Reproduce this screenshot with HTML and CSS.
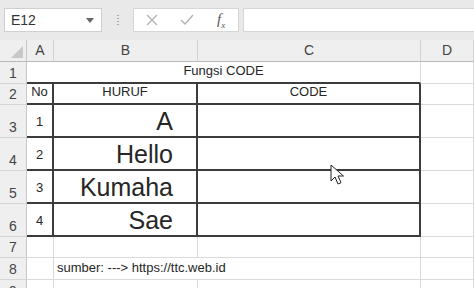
FILE: index.html
```html
<!DOCTYPE html>
<html lang="en">
<head>
    <meta charset="UTF-8">
    <title>Fungsi CODE</title>
    <link rel="stylesheet" href="styles.css">
</head>
<body>
    <div class="toolbar">
        <div class="name-box">
            <span>E12</span>
            <svg class="caret" width="8" height="5" viewBox="0 0 8 5"><path d="M0 0h8L4 5z" fill="#666"/></svg>
        </div>
        <div class="grip">
            <i></i><i></i><i></i><i></i>
        </div>
        <div class="fx-buttons">
            <svg width="12" height="12" viewBox="0 0 12 12"><path d="M1 1l10 10M11 1L1 11" stroke="#b4b4b4" stroke-width="1.4" fill="none"/></svg>
            <svg width="14" height="12" viewBox="0 0 14 12"><path d="M1 6l4 4 8-9" stroke="#b4b4b4" stroke-width="1.5" fill="none"/></svg>
            <span class="fx">f<sub>x</sub></span>
        </div>
        <div class="formula"></div>
    </div>

    <div class="sheet">
        <div class="corner"><span class="tri"></span></div>
        <div class="col-head">A</div>
        <div class="col-head">B</div>
        <div class="col-head">C</div>
        <div class="col-head">D</div>

        <div class="row-head">1</div>
        <div class="cell title">Fungsi CODE</div>
        <div class="cell"></div>

        <div class="row-head">2</div>
        <div class="cell box center">No</div>
        <div class="cell box center">HURUF</div>
        <div class="cell box center">CODE</div>
        <div class="cell"></div>

        <div class="row-head">3</div>
        <div class="cell box num">1</div>
        <div class="cell box big">A</div>
        <div class="cell box"></div>
        <div class="cell"></div>

        <div class="row-head">4</div>
        <div class="cell box num">2</div>
        <div class="cell box big">Hello</div>
        <div class="cell box"></div>
        <div class="cell"></div>

        <div class="row-head">5</div>
        <div class="cell box num">3</div>
        <div class="cell box big">Kumaha</div>
        <div class="cell box"></div>
        <div class="cell"></div>

        <div class="row-head">6</div>
        <div class="cell box num">4</div>
        <div class="cell box big">Sae</div>
        <div class="cell box"></div>
        <div class="cell"></div>

        <div class="row-head">7</div>
        <div class="cell"></div>
        <div class="cell"></div>
        <div class="cell"></div>
        <div class="cell"></div>

        <div class="row-head">8</div>
        <div class="cell"></div>
        <div class="cell source">sumber: ---&gt; https://ttc.web.id</div>
        <div class="cell"></div>

        <div class="row-head">9</div>
        <div class="cell"></div>
        <div class="cell"></div>
        <div class="cell"></div>
        <div class="cell"></div>

        <svg class="pointer" width="14" height="22" viewBox="0 0 14 22">
            <path d="M1 1v16l4-4 3 7 3-1.3-3-6.7h5.5z" fill="#fff" stroke="#222" stroke-width="1" stroke-linejoin="round"/>
        </svg>
    </div>
</body>
</html>
```

FILE: styles.css
```css
body {
    margin: 0;
    width: 474px;
    height: 288px;
    overflow: hidden;
    font-family: 'Liberation Sans', Arial, sans-serif;
    color: #262626;
    background-color: #fff;
}

/* Formula bar */
.toolbar {
    height: 40px;
    background-color: #e9e9e9;
    display: flex;
    align-items: flex-start;
    padding: 8px 0 0 4px;
    box-sizing: border-box;
}

.name-box {
    width: 98px;
    height: 24px;
    box-sizing: border-box;
    background-color: #fff;
    border: 1px solid #cfcfcf;
    display: flex;
    align-items: center;
    justify-content: space-between;
    padding: 0 6px 0 6px;
    font-size: 14px;
    color: #333;
}

.caret {
    margin-right: 1px;
}

.grip {
    width: 31px;
    height: 24px;
    display: flex;
    flex-direction: column;
    align-items: center;
    justify-content: center;
    gap: 2px;
}

.grip i {
    width: 2px;
    height: 1px;
    background-color: #a8a8a8;
}

.fx-buttons {
    width: 106px;
    height: 24px;
    box-sizing: border-box;
    background-color: #fff;
    border: 1px solid #d6d6d6;
    display: flex;
    align-items: center;
    padding: 0 0 0 12px;
    gap: 22px;
}

.fx {
    font-family: 'Liberation Serif', serif;
    font-style: italic;
    font-size: 15px;
    color: #555;
    margin-left: 1px;
}

.fx sub {
    font-size: 9px;
}

.formula {
    flex: 1;
    margin-left: 4px;
    height: 24px;
    box-sizing: border-box;
    background-color: #fff;
    border: 1px solid #d6d6d6;
    border-right: none;
}

/* Sheet grid */
.sheet {
    position: relative;
    display: grid;
    grid-template-columns: 27px 27px 144px 223px 53px;
    grid-template-rows: 22px 22px 21px 33px 33px 33px 33px 21px 22px 22px;
    font-size: 13px;
}

.corner,
.col-head,
.row-head {
    background-color: #efefef;
    color: #444;
    box-sizing: border-box;
}

.corner {
    border-right: 1px solid #c9c9c9;
    border-bottom: 1px solid #b9b9b9;
    position: relative;
}

.tri {
    position: absolute;
    right: 3px;
    bottom: 3px;
    width: 0;
    height: 0;
    border-left: 12px solid transparent;
    border-bottom: 12px solid #c8c8c8;
}

.col-head {
    border-right: 1px solid #d2d2d2;
    border-bottom: 1px solid #b9b9b9;
    display: flex;
    align-items: flex-end;
    justify-content: center;
    font-size: 14px;
    line-height: 16px;
    padding-bottom: 3px;
}

.row-head {
    border-right: 1px solid #c9c9c9;
    border-bottom: 1px solid #d6d6d6;
    display: flex;
    align-items: flex-end;
    justify-content: center;
    font-size: 14px;
    line-height: 16px;
    padding-bottom: 2px;
}

.cell {
    box-sizing: border-box;
    border-right: 1px solid #dadada;
    border-bottom: 1px solid #dadada;
    display: flex;
    align-items: flex-end;
    line-height: 16px;
    padding: 0 3px 3px;
    white-space: nowrap;
}

.title {
    grid-column: span 3;
    justify-content: center;
    border-bottom: 2px solid #3c3c3c;
}

.box {
    border-right: 2px solid #3c3c3c;
    border-bottom: 2px solid #3c3c3c;
}

.center {
    justify-content: center;
}

.num {
    align-items: center;
    justify-content: center;
    padding: 2px 0 0;
}

.big {
    justify-content: flex-end;
    font-size: 25px;
    line-height: 25px;
    padding: 0 23px 2px 0;
}

.source {
    grid-column: span 2;
    padding-left: 3px;
    padding-bottom: 3px;
}

.pointer {
    position: absolute;
    left: 330px;
    top: 124px;
}
```
